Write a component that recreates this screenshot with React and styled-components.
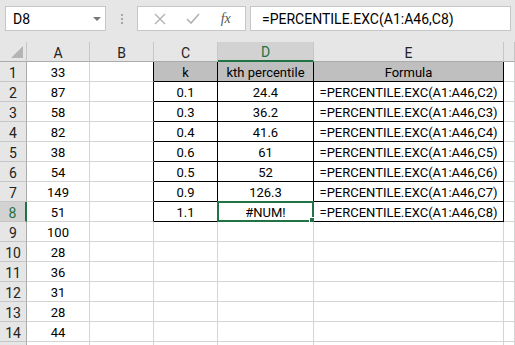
import React from "react";
import styled, { createGlobalStyle } from "styled-components";

const GREEN = "#217346";
const GRID = "#d4d4d4";

const GlobalStyle = createGlobalStyle`
  html, body {
    margin: 0;
    padding: 0;
    background: #ffffff;
    overflow: hidden;
  }
  body {
    font-family: Roboto, "Liberation Sans", sans-serif;
    font-size: 13px;
    color: #000;
  }
`;

const Page = styled.div`
  width: 515px;
  height: 345px;
  overflow: hidden;
`;

const Toolbar = styled.div`
  height: 42px;
  box-sizing: border-box;
  background: #e6e6e6;
  display: flex;
  align-items: flex-start;
  padding: 6px 4px 0 5px;
`;

const Box = styled.div`
  height: 25px;
  box-sizing: border-box;
  background: #fff;
  border: 1px solid #c6c6c6;
  display: flex;
  align-items: center;
`;

const NameBox = styled(Box)`
  width: 101px;
  padding: 0 0 0 7px;
  justify-content: space-between;
  font-size: 14px;
`;

const DropArrow = styled.span`
  width: 0;
  height: 0;
  margin-right: 4px;
  border-left: 4px solid transparent;
  border-right: 4px solid transparent;
  border-top: 4px solid #777;
`;

const Grip = styled.div`
  width: 31px;
  height: 25px;
  display: flex;
  flex-direction: column;
  align-items: center;
  justify-content: center;
  gap: 2px;
  span {
    width: 2px;
    height: 2px;
    background: #a6a6a6;
  }
`;

const FxBox = styled(Box)`
  width: 109px;
  justify-content: space-around;
  padding: 0 4px 0 6px;
  margin-right: 4px;
`;

const FxLabel = styled.span`
  font-family: "Liberation Serif", serif;
  font-style: italic;
  font-size: 14px;
  color: #555;
`;

const FormulaBox = styled(Box)`
  flex: 1;
  padding-left: 11px;
  font-size: 14px;
`;

const Sheet = styled.div`
  display: grid;
  grid-template-columns: 27px 63px 64px 64px 96px 190px 1fr;
  grid-auto-rows: 20px;
`;

const Cell = styled.div`
  position: relative;
  box-sizing: border-box;
  display: flex;
  align-items: center;
  justify-content: center;
  padding-top: 2px;
  white-space: nowrap;
  overflow: visible;
  background: ${(p) => p.$bg || "#fff"};
  color: ${(p) => p.$color || "#000"};
  border-right: 1px solid ${(p) => p.$r || GRID};
  border-bottom: 1px solid ${(p) => p.$b || GRID};
`;

const HeadCell = styled(Cell)`
  background: ${(p) => (p.$active ? "#d2d2d2" : "#e6e6e6")};
  color: ${(p) => (p.$active ? GREEN : "#222")};
  border-right: 1px solid #c6c6c6;
  border-bottom: ${(p) => (p.$active ? `2px solid ${GREEN}` : "1px solid #ababab")};
  font-size: 14px;
`;

const RowHead = styled(Cell)`
  background: ${(p) => (p.$active ? "#d2d2d2" : "#e6e6e6")};
  color: ${(p) => (p.$active ? GREEN : "#222")};
  border-right: ${(p) => (p.$active ? `2px solid ${GREEN}` : "1px solid #ababab")};
  border-bottom: 1px solid #c6c6c6;
  font-size: 14px;
`;

const Corner = styled(HeadCell)`
  &::after {
    content: "";
    position: absolute;
    right: 3px;
    bottom: 3px;
    border-left: 12px solid transparent;
    border-bottom: 12px solid #b4b4b4;
  }
`;

const Selection = styled.div`
  position: absolute;
  left: -1px;
  top: -1px;
  right: -1px;
  bottom: -1px;
  border: 2px solid ${GREEN};
  pointer-events: none;
`;

const Handle = styled.div`
  position: absolute;
  right: -4px;
  bottom: -4px;
  width: 5px;
  height: 5px;
  background: ${GREEN};
  border: 1px solid #fff;
`;

// last entry is the partly visible row 15
const colA = [33, 87, 58, 82, 38, 54, 149, 51, 100, 28, 36, 31, 28, 44, ""];
const table = [
  ["k", "kth percentile", "Formula"],
  ["0.1", "24.4", "=PERCENTILE.EXC(A1:A46,C2)"],
  ["0.3", "36.2", "=PERCENTILE.EXC(A1:A46,C3)"],
  ["0.4", "41.6", "=PERCENTILE.EXC(A1:A46,C4)"],
  ["0.6", "61", "=PERCENTILE.EXC(A1:A46,C5)"],
  ["0.5", "52", "=PERCENTILE.EXC(A1:A46,C6)"],
  ["0.9", "126.3", "=PERCENTILE.EXC(A1:A46,C7)"],
  ["1.1", "#NUM!", "=PERCENTILE.EXC(A1:A46,C8)"],
];

const columns = ["A", "B", "C", "D", "E", ""];

const App = () => {
  return (
    <Page>
      <GlobalStyle />
      <Toolbar>
        <NameBox>
          D8
          <DropArrow />
        </NameBox>
        <Grip>
          <span />
          <span />
          <span />
        </Grip>
        <FxBox>
          <svg width="12" height="12" viewBox="0 0 12 12">
            <path d="M1 1 L11 11 M11 1 L1 11" stroke="#b3b3b3" strokeWidth="1.4" fill="none" />
          </svg>
          <svg width="14" height="12" viewBox="0 0 14 12">
            <path d="M1 6 L5 10 L13 1" stroke="#b3b3b3" strokeWidth="1.6" fill="none" />
          </svg>
          <FxLabel>fx</FxLabel>
        </FxBox>
        <FormulaBox>=PERCENTILE.EXC(A1:A46,C8)</FormulaBox>
      </Toolbar>

      <Sheet>
        <Corner />
        {columns.map((c) => (
          <HeadCell key={c || "F"} $active={c === "D"}>
            {c}
          </HeadCell>
        ))}

        {colA.map((a, i) => {
          const row = table[i];
          const inTable = !!row;
          const isHead = i === 0;
          return (
            <React.Fragment key={i}>
              <RowHead $active={i === 7}>{i < 14 ? i + 1 : ""}</RowHead>
              <Cell>{a}</Cell>
              <Cell $r={inTable ? "#000" : undefined} />
              {[0, 1, 2].map((j) => (
                <Cell
                  key={j}
                  $bg={isHead ? "#bfbfbf" : undefined}
                  $r={inTable ? "#000" : undefined}
                  $b={inTable ? "#000" : undefined}
                >
                  {row ? row[j] : ""}
                  {i === 7 && j === 1 && (
                    <Selection>
                      <Handle />
                    </Selection>
                  )}
                </Cell>
              ))}
              <Cell />
            </React.Fragment>
          );
        })}
      </Sheet>
    </Page>
  );
};

export default App;
